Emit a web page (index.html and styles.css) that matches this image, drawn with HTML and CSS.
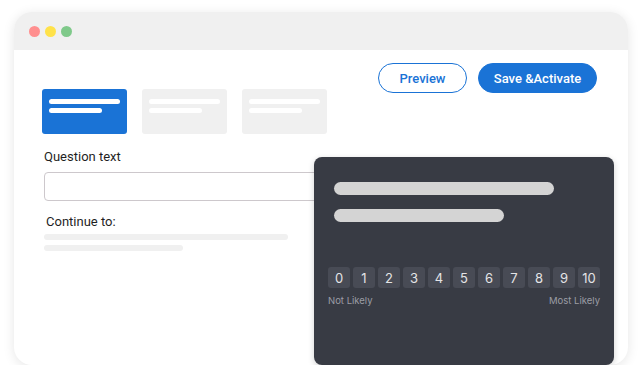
FILE: index.html
```html
<!DOCTYPE html>
<html>
<head>
<meta charset="utf-8">
<link rel="stylesheet" href="styles.css">
</head>
<body>
<div class="window">
  <div class="titlebar">
    <span class="dot red"></span>
    <span class="dot yellow"></span>
    <span class="dot green"></span>
  </div>
  <div class="content">
    <div class="toprow">
      <div class="cards">
        <div class="card active"><span class="l1"></span><span class="l2"></span></div>
        <div class="card"><span class="l1"></span><span class="l2"></span></div>
        <div class="card"><span class="l1"></span><span class="l2"></span></div>
      </div>
      <div class="actions">
        <button class="btn outline">Preview</button>
        <button class="btn solid">Save &amp;Activate</button>
      </div>
    </div>
    <div class="form">
      <div class="label">Question text</div>
      <div class="input"></div>
      <div class="label cont">Continue to:</div>
      <div class="bar b1"></div>
      <div class="bar b2"></div>
    </div>
  </div>
  <div class="panel">
    <div class="pbar pb1"></div>
    <div class="pbar pb2"></div>
    <div class="scale">
      <span>0</span><span>1</span><span>2</span><span>3</span><span>4</span><span>5</span><span>6</span><span>7</span><span>8</span><span>9</span><span>10</span>
    </div>
    <div class="legend"><span>Not Likely</span><span>Most Likely</span></div>
  </div>
</div>
</body>
</html>
```
FILE: styles.css
```css
* { box-sizing: border-box; }
body {
  margin: 0;
  background: #ffffff;
  font-family: Roboto, "Liberation Sans", sans-serif;
}
.window {
  position: relative;
  margin: 12px 0 0 14px;
  width: 614px;
  height: 353px;
  background: #fff;
  border-radius: 18px;
  box-shadow: 0 2px 12px rgba(0,0,0,0.10);
}
.titlebar {
  height: 38px;
  background: #f0f0f0;
  border-radius: 18px 18px 0 0;
  display: flex;
  align-items: center;
  gap: 5px;
  padding: 0 0 0 15px;
}
.dot { width: 11px; height: 11px; border-radius: 50%; display: block; }
.red { background: #ff8f8f; }
.yellow { background: #ffe24a; }
.green { background: #7fc98a; }
.content { padding: 13px 31px 0 28px; }
.toprow { display: flex; justify-content: space-between; align-items: flex-start; }
.cards { display: flex; gap: 15px; margin-top: 26px; }
.card {
  width: 85px; height: 45px; background: #f0f0f0; border-radius: 3px;
  display: flex; flex-direction: column; gap: 4px; padding: 10px 0 0 7px;
}
.card span { display: block; height: 5px; border-radius: 3px; background: #fff; }
.card .l1 { width: 71px; }
.card .l2 { width: 53px; }
.card.active { background: #1a73d6; }
.actions { display: flex; gap: 11px; }
.btn {
  height: 30px; border-radius: 15px; font-family: Roboto, sans-serif;
  font-size: 13px; font-weight: 500; border: 1px solid #1a73d6; padding: 0;
}
.outline { width: 89px; background: #fff; color: #1a73d6; }
.solid { width: 119px; background: #1a73d6; color: #fff; }
.form { padding-left: 2px; margin-top: 15px; }
.label { font-size: 13px; line-height: 16px; color: #1f1f1f; }
.input {
  margin-top: 7px; width: 320px; height: 29px; border: 1px solid #cdc8cc; border-radius: 4px;
}
.cont { margin-top: 13px; padding-left: 2px; }
.bar { height: 6px; border-radius: 3px; background: #f0f0f0; }
.b1 { width: 244px; margin-top: 4px; }
.b2 { width: 139px; margin-top: 5px; }
.panel {
  position: absolute;
  left: 300px; top: 145px; width: 300px; height: 208px;
  background: #383b44; border-radius: 8px;
  box-shadow: 0 2px 6px rgba(0,0,0,0.18);
  padding: 25px 14px 0 14px;
  font-family: Inter, Roboto, sans-serif;
}
.pbar { height: 13px; border-radius: 7px; background: #d4d4d4; margin-left: 6px; }
.pb1 { width: 220px; }
.pb2 { width: 170px; margin-top: 14px; }
.scale { display: flex; gap: 3px; margin-top: 45px; }
.scale span {
  width: 22px; height: 21px; background: #484b55; border-radius: 3px;
  color: #e4e4e6; font-size: 13px; display: flex; align-items: center; justify-content: center;
}
.legend {
  display: flex; justify-content: space-between; margin-top: 7px; width: 272px;
  font-size: 9.5px; line-height: 12px; color: #9b9da4;
}
```
